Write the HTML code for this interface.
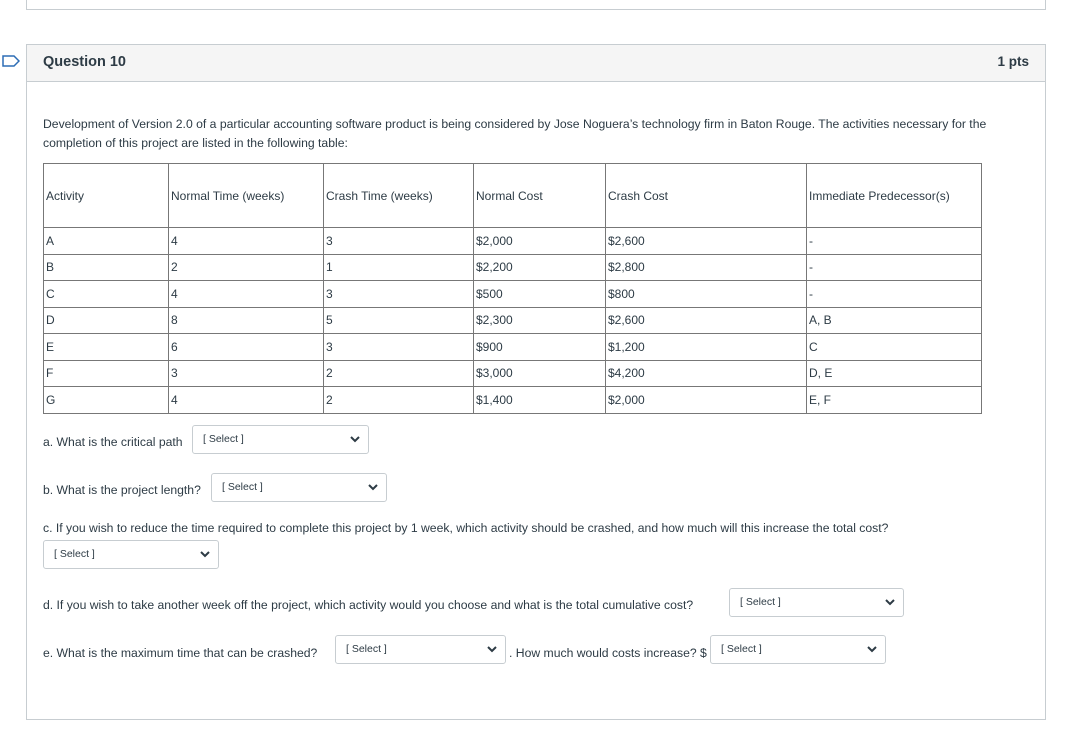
<!DOCTYPE html>
<html><head><style>
body{margin:0;width:1088px;height:744px;background:#fff;font-family:"Liberation Sans",sans-serif;color:#2d3b45;position:relative;overflow:hidden;font-size:12.2px}
.a{position:absolute}
.sel{position:absolute;height:29px;border:1px solid #c7cdd1;border-radius:3px;box-sizing:border-box;background:#fff}
.sel span{position:absolute;left:10px;top:7px;font-size:10.5px;color:#2d3b45}
.sel svg{position:absolute;right:8px;top:10px}
table{position:absolute;left:43px;top:163px;border-collapse:collapse;font-size:12px}
td{border:1px solid #777;padding:0 2px;vertical-align:middle;height:25.5px;color:#2d3b45}
tr.h td{height:63px}
</style></head><body>
<div class="a" style="left:26px;top:-1px;width:1020px;height:11px;border:1px solid #c7cdd1;box-sizing:border-box"></div>
<svg class="a" style="left:2px;top:55px" width="18" height="12"><path d="M1 1H12L17 6L12 11H1Z" fill="none" stroke="#2d6db5" stroke-width="1.5"/></svg>
<div class="a" style="left:26px;top:44px;width:1020px;height:676px;border:1px solid #c7cdd1;box-sizing:border-box"></div>
<div class="a" style="left:27px;top:45px;width:1018px;height:36px;background:#f5f5f5;border-bottom:1px solid #c7cdd1"></div>
<div class="a" style="left:43px;top:54px;font-weight:bold;font-size:14.5px">Question 10</div>
<div class="a" style="right:59px;top:54px;font-weight:bold;font-size:13.5px">1 pts</div>
<div class="a" style="left:43px;top:115px;width:990px;line-height:19px">Development of Version 2.0 of a particular accounting software product is being considered by Jose Noguera’s technology firm in Baton Rouge. The activities necessary for the completion of this project are listed in the following table:</div>
<table>
<colgroup><col style="width:125px"><col style="width:155px"><col style="width:150px"><col style="width:132px"><col style="width:201px"><col style="width:175px"></colgroup>
<tr class="h"><td>Activity</td><td>Normal Time (weeks)</td><td>Crash Time (weeks)</td><td>Normal Cost</td><td>Crash Cost</td><td>Immediate Predecessor(s)</td></tr>
<tr><td>A</td><td>4</td><td>3</td><td>$2,000</td><td>$2,600</td><td>-</td></tr>
<tr><td>B</td><td>2</td><td>1</td><td>$2,200</td><td>$2,800</td><td>-</td></tr>
<tr><td>C</td><td>4</td><td>3</td><td>$500</td><td>$800</td><td>-</td></tr>
<tr><td>D</td><td>8</td><td>5</td><td>$2,300</td><td>$2,600</td><td>A, B</td></tr>
<tr><td>E</td><td>6</td><td>3</td><td>$900</td><td>$1,200</td><td>C</td></tr>
<tr><td>F</td><td>3</td><td>2</td><td>$3,000</td><td>$4,200</td><td>D, E</td></tr>
<tr><td>G</td><td>4</td><td>2</td><td>$1,400</td><td>$2,000</td><td>E, F</td></tr>
</table>
<div class="a" style="left:43px;top:435px">a. What is the critical path</div>
<div class="sel" style="left:192px;top:425px;width:177px"><span>[ Select ]</span><svg width="10" height="7"><path d="M1 1L5 5L9 1" stroke="#2d3b45" stroke-width="2" fill="none"/></svg></div>
<div class="a" style="left:43px;top:483px">b. What is the project length?</div>
<div class="sel" style="left:211px;top:473px;width:176px"><span>[ Select ]</span><svg width="10" height="7"><path d="M1 1L5 5L9 1" stroke="#2d3b45" stroke-width="2" fill="none"/></svg></div>
<div class="a" style="left:43px;top:521px">c. If you wish to reduce the time required to complete this project by 1 week, which activity should be crashed, and how much will this increase the total cost?</div>
<div class="sel" style="left:43px;top:540px;width:176px"><span>[ Select ]</span><svg width="10" height="7"><path d="M1 1L5 5L9 1" stroke="#2d3b45" stroke-width="2" fill="none"/></svg></div>
<div class="a" style="left:43px;top:598px">d. If you wish to take another week off the project, which activity would you choose and what is the total cumulative cost?</div>
<div class="sel" style="left:729px;top:588px;width:175px"><span>[ Select ]</span><svg width="10" height="7"><path d="M1 1L5 5L9 1" stroke="#2d3b45" stroke-width="2" fill="none"/></svg></div>
<div class="a" style="left:43px;top:646px">e. What is the maximum time that can be crashed?</div>
<div class="sel" style="left:335px;top:635px;width:171px"><span>[ Select ]</span><svg width="10" height="7"><path d="M1 1L5 5L9 1" stroke="#2d3b45" stroke-width="2" fill="none"/></svg></div>
<div class="a" style="left:509px;top:646px">. How much would costs increase? $</div>
<div class="sel" style="left:710px;top:635px;width:176px"><span>[ Select ]</span><svg width="10" height="7"><path d="M1 1L5 5L9 1" stroke="#2d3b45" stroke-width="2" fill="none"/></svg></div>
</body></html>
